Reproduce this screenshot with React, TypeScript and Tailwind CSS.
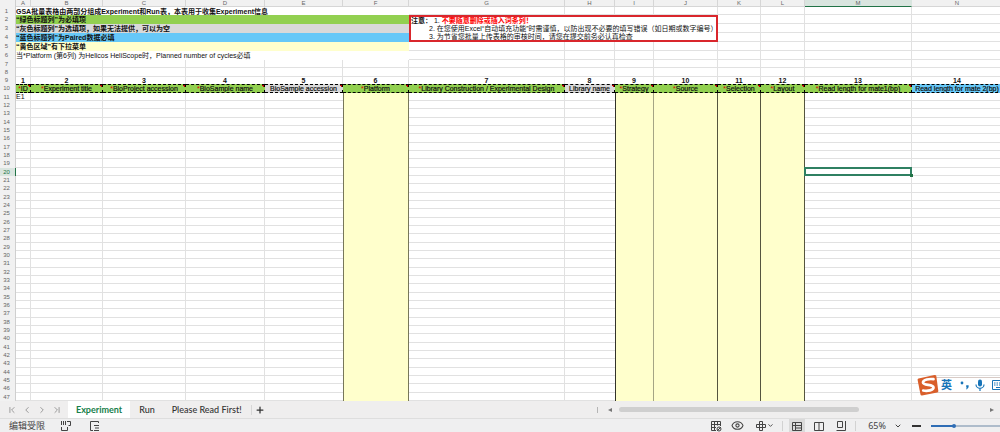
import { useState } from 'react'
import { ChevronDown, ChevronFirst, ChevronLast, ChevronLeft, ChevronRight, Eye, Plus } from 'lucide-react'
import clsx from 'clsx'

interface Column {
  letter: string
  title: string
  required?: boolean
  width: string
  fill: string
  body?: string
}

const GREEN = 'bg-[#92d050]'
const GRAY = 'bg-[#d9d9d9]'
const BLUE = 'bg-[#66c8f8]'
const LINE = 'border-[#e1e1e1]'
const PLAIN = 'border-r border-b border-[#e1e1e1]'

const columns: Column[] = [
  { letter: 'A', title: 'ID', required: true, width: 'w-[15px]', fill: GREEN },
  { letter: 'B', title: 'Experiment title', required: true, width: 'w-[72px]', fill: GREEN },
  { letter: 'C', title: 'BioProject accession', required: true, width: 'w-[83px]', fill: GREEN },
  { letter: 'D', title: 'BioSample name', required: true, width: 'w-[79px]', fill: GREEN },
  { letter: 'E', title: 'BioSample accession', width: 'w-[78px]', fill: GRAY, body: 'border-b border-[#e1e1e1]' },
  { letter: 'F', title: 'Platform', required: true, width: 'w-[66px]', fill: GREEN, body: 'bg-[#ffffcc] border-x border-[#77775a]' },
  { letter: 'G', title: 'Library Construction / Experimental Design', required: true, width: 'w-[156px]', fill: GREEN },
  { letter: 'H', title: 'Library name', width: 'w-[50px]', fill: GRAY, body: 'border-b border-[#e1e1e1]' },
  { letter: 'I', title: 'Strategy', required: true, width: 'w-[39px]', fill: GREEN, body: 'bg-[#ffffcc] border-x border-l-[#33332a] border-r-[#a5a584]' },
  { letter: 'J', title: 'Source', required: true, width: 'w-16', fill: GREEN, body: 'bg-[#ffffcc] border-r border-[#55553f]' },
  { letter: 'K', title: 'Selection', required: true, width: 'w-[43px]', fill: GREEN, body: 'bg-[#ffffcc] border-r border-[#55553f]' },
  { letter: 'L', title: 'Layout', required: true, width: 'w-11', fill: GREEN, body: 'bg-[#ffffcc] border-r border-[#55553f]' },
  { letter: 'M', title: 'Read length for mate1(bp)', required: true, width: 'w-[107px]', fill: GREEN },
  { letter: 'N', title: 'Read length for mate 2(bp)', width: 'w-[91px]', fill: BLUE },
]

const intro = [
  { text: 'GSA批量表格由两部分组成Experiment和Run表，本表用于收集Experiment信息', fill: 'bg-white', bold: true },
  { text: '“绿色标题列”为必填项', fill: GREEN, bold: true },
  { text: '“灰色标题列”为选填项，如果无法提供，可以为空', fill: GRAY, bold: true },
  { text: '“蓝色标题列”为Paired数据必填', fill: BLUE, bold: true },
  { text: '“黄色区域”有下拉菜单', fill: 'bg-[#ffffcc]', bold: true },
  { text: '当*Platform (第6列) 为Helicos HeliScope时，Planned number of cycles必填', fill: 'bg-white', bold: false },
]

const bodyRows = Array.from({ length: 37 }, (_, i) => i + 11)
const tabs = ['Experiment', 'Run', 'Please Read First!']

function RowHead({ n, active }: { n: number; active?: boolean }) {
  return (
    <th
      scope="row"
      className={clsx(
        'border-r p-0 pr-0.5 text-center text-[6px] font-normal',
        active ? 'border-r-[#217346] bg-[#d9e5df] text-[#217346]' : 'border-r-[#cfcfcf] bg-[#f1f1f1] text-[#666]'
      )}
    >
      {n}
    </th>
  )
}

function Notice() {
  return (
    <td rowSpan={3} colSpan={4} className="overflow-hidden bg-white p-0 align-top whitespace-nowrap">
      <div className="h-[27px] overflow-hidden border-2 border-[#d9262c] leading-[8px]">
        <p><b>注意：</b> 1. <b className="text-[#f00]">不要随意删除或插入词条列！</b></p>
        <p className="pl-[18px]">2. 在您使用Excel“自动填充功能”时需谨慎，以防出现不必要的填写错误（如日期或数字编号）</p>
        <p className="pl-[18px]">3. 为节省您批量上传表格的审核时间，请您在提交前务必认真检查</p>
      </div>
    </td>
  )
}

function Sheet() {
  return (
    <table className="w-[1003px] min-w-full table-fixed border-separate border-spacing-0 bg-white text-[7px] leading-[7px] text-[#111]">
      <colgroup>
        <col className="w-4" />
        {columns.map(c => <col key={c.letter} className={c.width} />)}
      </colgroup>
      <thead>
        <tr className="h-[7px] text-[6px] leading-[5px] text-[#666]">
          <td className="border-r border-[#cfcfcf] bg-[#f1f1f1] p-0" />
          {columns.map(c => (
            <th
              key={c.letter}
              scope="col"
              className={clsx(
                'border-r border-b p-0 text-center font-normal',
                c.letter === 'M' ? 'border-r-[#d9e5df] border-b-[#217346] bg-[#d9e5df]' : 'border-[#d6d6d6] bg-[#f1f1f1]'
              )}
            >
              {c.letter}
            </th>
          ))}
        </tr>
      </thead>
      <tbody>
        {intro.map((row, i) => (
          <tr key={i} className={i === 0 ? 'h-2' : 'h-[9px]'}>
            <RowHead n={i + 1} />
            <td
              colSpan={6}
              className={clsx('overflow-hidden p-0 whitespace-nowrap', row.fill, row.bold && 'font-bold')}
            >
              {row.text}
            </td>
            {i === 1 && <Notice />}
            {columns.slice(i > 0 && i < 4 ? 10 : 6).map(c => (
              <td key={c.letter} className={clsx('p-0', PLAIN)} />
            ))}
          </tr>
        ))}
        {[7, 8].map(n => (
          <tr key={n} className={n === 7 ? 'h-2' : 'h-[9px]'}>
            <RowHead n={n} />
            {columns.map(c => <td key={c.letter} className={clsx('p-0', PLAIN)} />)}
          </tr>
        ))}
        <tr className="h-[7px]">
          <RowHead n={9} />
          {columns.map((c, i) => (
            <td key={c.letter} className={clsx('border-r p-0 text-center font-bold', LINE)}>{i + 1}</td>
          ))}
        </tr>
        <tr className="h-[9px]">
          <RowHead n={10} />
          {columns.map(c => (
            <td
              key={c.letter}
              className={clsx('overflow-hidden border-y border-r border-dashed border-black p-0 text-center whitespace-nowrap', c.fill)}
            >
              <div className="flex justify-center bg-[linear-gradient(225deg,#c00000_2px,transparent_2px)] [-webkit-text-stroke:0.2px_#111]">
                {c.required && <span className="text-[#e00000] [-webkit-text-stroke:0]">*</span>}
                {c.title}
              </div>
            </td>
          ))}
        </tr>
        {bodyRows.map((n, i) => (
          <tr key={n} className={i % 3 === 2 ? 'h-[9px]' : 'h-2'}>
            <RowHead n={n} active={n === 20} />
            {columns.map(c => (
              <td key={c.letter} className={clsx('relative p-0', c.body ?? PLAIN)}>
                {n === 11 && c.letter === 'A' && 'E1'}
                {n === 20 && c.letter === 'M' && (
                  <span className="absolute -inset-px z-10 border-2 border-[#2f8062]">
                    <i className="absolute -right-[3px] -bottom-[3px] size-[3px] bg-[#217346]" />
                  </span>
                )}
              </td>
            ))}
          </tr>
        ))}
      </tbody>
    </table>
  )
}

function InputMethodBar() {
  return (
    <div className="absolute right-0 bottom-[6px] flex h-5 w-[83px] items-center font-bold text-[#1874b8]">
      <div className="absolute inset-y-[2px] right-0 left-3 border-y border-[#d8cbc6] bg-white" />
      <svg viewBox="0 0 22 22" className="relative size-[22px] shrink-0">
        <path d="M1.5 4.5 17.5 1 Q19 .8 19.3 2L21.3 17Q21.4 18.2 20.2 18.5L5 21.4Q3.8 21.6 3.5 20.4L.6 6Q.5 4.8 1.5 4.5Z" fill="#d95f2b" />
        <path d="M16.5 5.2C12.5 4.6 6 5.5 6 8.5c0 3.3 10.5 1.5 10.5 5 0 2.8-6 3.8-10.3 3" fill="none" stroke="#fff" strokeWidth="2.7" strokeLinecap="round" />
      </svg>
      <span className="relative ml-0.5 text-[11px] leading-4">英</span>
      <svg viewBox="0 0 12 12" className="relative ml-2 size-3 shrink-0">
        <circle cx="2" cy="4" r="1.4" fill="currentColor" />
        <path d="M6.2 6.2h2.4v2L7 10.2H6l.9-1.8h-.7z" fill="currentColor" />
      </svg>
      <svg viewBox="0 0 12 12" className="relative ml-0.5 size-3 shrink-0">
        <rect x="4" y="0.5" width="4" height="7" rx="2" fill="currentColor" />
        <path d="M2 5.5a4 3.8 0 0 0 8 0M6 9.5V12" fill="none" stroke="currentColor" strokeWidth="1.2" />
      </svg>
      <svg viewBox="0 0 14 10" className="relative ml-1.5 h-2.5 w-3.5 shrink-0" fill="none" stroke="currentColor">
        <path d="M.5.5h13v9H.5z" />
        <path d="M2 3h10M2 5h10" strokeDasharray="1.500 1" />
        <path d="M4 7.500h6" />
      </svg>
    </div>
  )
}

function SheetTabs() {
  const [active, setActive] = useState('Experiment')
  return (
    <div className="flex h-[17px] items-center gap-px bg-[#efeeee] text-[9px] leading-[17px] text-[#333]">
      <div className="flex w-[67px] items-center gap-[5px] pl-[7px] text-[#8a8a8a]">
        <button aria-label="First sheet"><ChevronFirst size={10} strokeWidth={2} /></button>
        <button aria-label="Previous sheet"><ChevronLeft size={10} strokeWidth={2} /></button>
        <button aria-label="Next sheet"><ChevronRight size={10} strokeWidth={2} /></button>
        <button aria-label="Last sheet"><ChevronLast size={10} strokeWidth={2} /></button>
      </div>
      {tabs.map(t => (
        <button
          key={t}
          onClick={() => setActive(t)}
          className={clsx("h-full px-2 font-['Lato','Noto_Sans',sans-serif]", t === active ? 'bg-white font-bold text-[#17804a]' : 'font-medium')}
        >
          {t}
        </button>
      ))}
      <span className="h-2.5 w-px bg-[#d6d6d6]" />
      <button aria-label="Add sheet" className="ml-0.5"><Plus size={10} strokeWidth={3} /></button>
      <div className="ml-auto flex w-2/5 items-center text-[#777]">
        <span className="-ml-[3px] h-1.5 w-px bg-[#b5b5b5]" />
        <button aria-label="Scroll left" className="ml-2.5">
          <svg viewBox="0 0 4 6" className="h-1.5 w-1"><path d="M4 1v4L0 3z" fill="currentColor" /></svg>
        </button>
        <div className="ml-[7px] h-[5px] w-3/5 rounded-full bg-[#cfcfcf]" />
        <button aria-label="Scroll right" className="mr-1.5 ml-auto">
          <svg viewBox="0 0 4 6" className="h-1.5 w-1"><path d="M0 1v4l4-2z" fill="currentColor" /></svg>
        </button>
      </div>
    </div>
  )
}

function StatusBar() {
  const [zoom, setZoom] = useState(33)
  return (
    <div className="flex h-3.5 items-center overflow-hidden border-t border-[#dedede] bg-[#efeff0] text-[#444]">
      <span className="ml-[9px] text-[9px] leading-[14px]">编辑受限</span>
      <svg viewBox="0 0 12 12" className="ml-[15px] size-3" fill="none" stroke="currentColor">
        <path d="M1.500 1v4M3.500 1v4M5.500 1v4M7 1.500h3.500v4h-2M1.500 7v3.500h6V7" />
      </svg>
      <svg viewBox="0 0 12 12" className="ml-[17px] size-3" fill="none" stroke="currentColor">
        <path d="M9.500 3V1.500h-8v9H4M5 5.500h5M6 8h4M5 10.500h5" />
      </svg>
      <div className="ml-auto flex h-full items-center">
        <button aria-label="Protect view">
          <svg viewBox="0 0 12 12" className="size-3" fill="none" stroke="currentColor">
            <path d="M6 10.500H1.500v-9h9V6M1.500 4.500h9M1.500 7.500H6M4.500 1.500v9M7.500 1.500v4" />
            <circle cx="9" cy="9" r="2" /><path d="m7 11 4-4" />
          </svg>
        </button>
        <button aria-label="Reading mode" className="ml-[9px]"><Eye size={13} strokeWidth={2} /></button>
        <button aria-label="Crosshair" className="ml-[11px] flex items-center">
          <svg viewBox="0 0 12 12" className="size-3" fill="none" stroke="currentColor">
            <path d="M4.500 1.500h3v9h-3zM1.500 4.500h9v3h-9z" />
          </svg>
          <ChevronDown size={7} strokeWidth={3} />
        </button>
        <span className="ml-2 h-2.5 w-px bg-[#d2d2d2]" />
        <button aria-label="Normal view" className="ml-1.5 flex h-full w-4 items-center justify-center bg-[#dadada]">
          <svg viewBox="0 0 12 12" className="size-3" fill="none" stroke="currentColor">
            <path d="M1.500 2.500h9v8h-9zM1.500 5.500h9M4.500 2.500v8M4.500 8h6" />
          </svg>
        </button>
        <button aria-label="Page layout" className="ml-2">
          <svg viewBox="0 0 12 12" className="size-3" fill="none" stroke="currentColor"><path d="M1.500 2.500h9v8h-9zM6 2.500v8" /></svg>
        </button>
        <button aria-label="Page break view" className="ml-2.5">
          <svg viewBox="0 0 12 12" className="size-3" fill="none" stroke="currentColor"><path d="M2.500 1.500h5v6h-5zM10.500 1v9.500H1.500" /></svg>
        </button>
        <span className="ml-2 h-2.5 w-px bg-[#d2d2d2]" />
        <button className="ml-3 flex items-center gap-2 text-[9px] leading-[13px]">65% <ChevronDown size={8} strokeWidth={3} /></button>
        <button aria-label="Zoom out" className="ml-2.5 h-0.5 w-[9px] bg-[#333]" />
        <input
          type="range"
          aria-label="Zoom"
          value={zoom}
          onChange={e => setZoom(Number(e.target.value))}
          className="ml-2.5 h-0.5 w-[69px] appearance-none bg-[linear-gradient(to_right,#2f6db5_33%,#aebccb_33%)] [&::-webkit-slider-thumb]:size-1 [&::-webkit-slider-thumb]:appearance-none [&::-webkit-slider-thumb]:rounded-full [&::-webkit-slider-thumb]:bg-[#2f6db5]"
        />
      </div>
    </div>
  )
}

export default function App() {
  return (
    <main className="w-full overflow-hidden bg-[#efeeee] font-['Liberation_Sans','Noto_Sans_CJK_SC',sans-serif]">
      <div className="relative overflow-hidden">
        <Sheet />
        <InputMethodBar />
      </div>
      <div className="font-['Noto_Sans','Noto_Sans_CJK_SC',sans-serif]">
        <SheetTabs />
        <StatusBar />
      </div>
    </main>
  )
}
